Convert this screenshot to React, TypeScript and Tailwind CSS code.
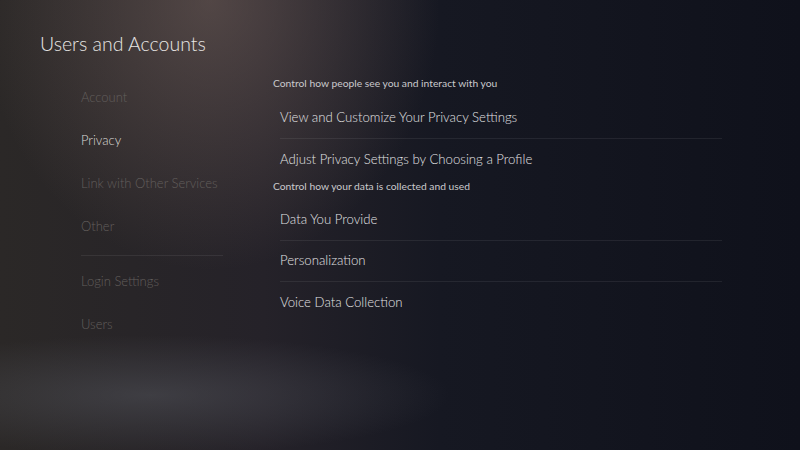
const navTop = ['Account', 'Privacy', 'Link with Other Services', 'Other']
const navBottom = ['Login Settings', 'Users']

function NavItem({ label, active }: { label: string; active?: boolean }) {
  return (
    <div
      className={`h-[43px] flex items-center whitespace-nowrap text-[13px] ${active ? 'text-[#dcdad8]' : 'text-[#625e5c]'}`}
    >
      {label}
    </div>
  )
}

function Row({ label, divider = true }: { label: string; divider?: boolean }) {
  return (
    <div className={`h-[41px] flex items-center ml-[7px] ${divider ? 'border-b border-white/[0.07]' : ''}`}>
      <span className="text-[13.2px] text-[#e2e2e4] whitespace-nowrap">{label}</span>
    </div>
  )
}

function Caption({ children }: { children: string }) {
  return <div className="h-[14px] flex items-center text-[10.3px] font-normal text-[#c9c9cc]">{children}</div>
}

export default function App() {
  return (
    <div
      className="w-[800px] h-[450px] overflow-hidden font-light bg-[radial-gradient(ellipse_230px_270px_at_210px_0px,rgba(125,105,98,0.5),transparent),radial-gradient(ellipse_300px_60px_at_150px_395px,rgba(90,92,100,0.45),transparent),linear-gradient(90deg,#2b2827_0%,#252229_33%,#161822_55%,#0f111b_100%)]"
      style={{ fontFamily: 'Lato, "Open Sans", sans-serif' }}
    >
      <h1 className="pt-[31px] pl-[40px] text-[19.5px] leading-[26px] font-light text-[#e8e6e4]">Users and Accounts</h1>

      <div className="flex mt-[19px]">
        <nav className="ml-[81px] w-[142px]">
          {navTop.map((l) => (
            <NavItem key={l} label={l} active={l === 'Privacy'} />
          ))}
          <div className="mt-[7px] mb-[4px] border-t border-white/[0.07]" />
          {navBottom.map((l) => (
            <NavItem key={l} label={l} />
          ))}
        </nav>

        <div className="ml-[50px] w-[449px] pt-[1px]">
          <Caption>Control how people see you and interact with you</Caption>
          <div className="mt-[7px]">
            <Row label="View and Customize Your Privacy Settings" />
            <Row label="Adjust Privacy Settings by Choosing a Profile" divider={false} />
          </div>
          <Caption>Control how your data is collected and used</Caption>
          <div className="mt-[6px]">
            <Row label="Data You Provide" />
            <Row label="Personalization" />
            <Row label="Voice Data Collection" divider={false} />
          </div>
        </div>
      </div>
    </div>
  )
}
